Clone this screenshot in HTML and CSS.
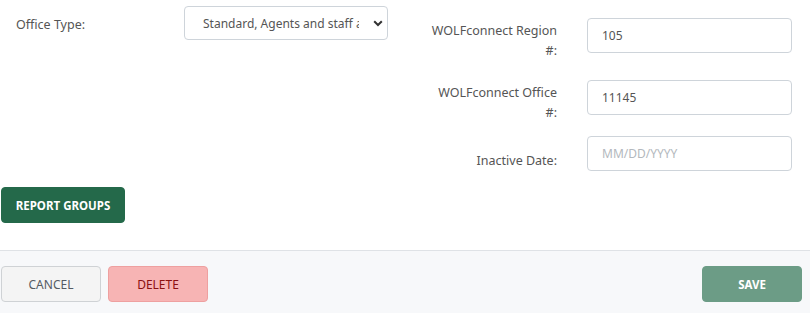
FILE: index.html
```html
<!DOCTYPE html>
<html>
<head>
<meta charset="utf-8">
<link rel="stylesheet" href="styles.css">
</head>
<body>
<div class="form">
  <div class="cols">
    <div class="col col-left">
      <div class="row">
        <label class="lbl lbl-left">Office Type:</label>
        <div class="select-wrap">
          <select class="select">
            <option>Standard, Agents and staff allowed</option>
          </select>
          <svg class="chev" width="10" height="7" viewBox="0 0 10 7"><path d="M1.2 1.2 5 5 8.8 1.2" fill="none" stroke="#333" stroke-width="2"/></svg>
        </div>
      </div>
    </div>
    <div class="col col-right">
      <div class="row row-1">
        <label class="lbl lbl-right">WOLFconnect Region #:</label>
        <input class="input" type="text" value="105">
      </div>
      <div class="row row-2">
        <label class="lbl lbl-right">WOLFconnect Office #:</label>
        <input class="input" type="text" value="11145">
      </div>
      <div class="row row-3">
        <label class="lbl lbl-right lbl-single">Inactive Date:</label>
        <input class="input" type="text" placeholder="MM/DD/YYYY">
      </div>
    </div>
  </div>
  <div class="actions">
    <button class="btn btn-green">REPORT GROUPS</button>
  </div>
</div>
<div class="footer">
  <div class="footer-left">
    <button class="btn btn-cancel">CANCEL</button>
    <button class="btn btn-delete">DELETE</button>
  </div>
  <button class="btn btn-save">SAVE</button>
</div>
</body>
</html>
```
FILE: styles.css
```css
html, body {
  margin: 0;
  padding: 0;
  background: #ffffff;
  font-family: "Noto Sans", "Open Sans", sans-serif;
  font-size: 12.5px;
  color: #555;
}
.form {
  height: 250px;
  box-sizing: border-box;
}
.cols {
  display: flex;
}
.col {
  width: 405px;
  box-sizing: border-box;
}
.col-left {
  padding: 6px 17px 0 16px;
}
.col-right {
  padding: 18px 18px 0 24px;
}
.row {
  display: flex;
  align-items: flex-start;
}
.row-1 { margin-bottom: 19px; }
.row-2 { margin-bottom: 13px; }
.lbl {
  line-height: 20px;
  color: #555;
}
.lbl-left {
  width: 168px;
  flex: none;
  padding-top: 9px;
}
.lbl-right {
  width: 128px;
  flex: none;
  margin-right: 30px;
  text-align: right;
  padding-top: 3px;
}
.lbl-single {
  padding-top: 15px;
}
.select-wrap {
  position: relative;
  flex: 1;
}
.select {
  appearance: none;
  -webkit-appearance: none;
  width: 100%;
  height: 34px;
  box-sizing: border-box;
  border: 1px solid #ced4da;
  border-radius: 4px;
  background: #fff;
  padding: 0 28px 0 18px;
  font-family: inherit;
  font-size: 12px;
  color: #555;
}
.chev {
  position: absolute;
  right: 5px;
  top: 14px;
}
.input {
  flex: 1;
  min-width: 0;
  height: 35px;
  box-sizing: border-box;
  border: 1px solid #ced4da;
  border-radius: 4px;
  padding: 0 14px;
  font-family: inherit;
  font-size: 12px;
  color: #555;
  background: #fff;
}
.input::placeholder {
  color: #b3b8bd;
}
.actions {
  padding: 16px 0 0 1px;
}
.btn {
  font-family: inherit;
  font-size: 12px;
  height: 36px;
  border-radius: 4px;
  box-sizing: border-box;
  cursor: pointer;
  padding: 0;
}
.btn-green {
  width: 124px;
  background: #24694a;
  border: 1px solid #24694a;
  color: #fff;
  font-weight: 700;
  font-size: 11.5px;
}
.footer {
  height: 63px;
  box-sizing: border-box;
  background: #f7f8fa;
  border-top: 1px solid #dfe2e6;
  padding: 15px 8px 0 1px;
  display: flex;
  justify-content: space-between;
  align-items: flex-start;
}
.footer-left {
  display: flex;
  gap: 7px;
}
.btn-cancel {
  width: 100px;
  background: #f4f4f4;
  border: 1px solid #cfd2d5;
  color: #555b63;
}
.btn-delete {
  width: 100px;
  background: #f7b4b4;
  border: 1px solid #eea0a0;
  color: #8b1010;
}
.btn-save {
  width: 100px;
  background: #6c9c86;
  border: 1px solid #6c9c86;
  color: #fff;
  font-weight: 700;
  font-size: 11.5px;
}
```
